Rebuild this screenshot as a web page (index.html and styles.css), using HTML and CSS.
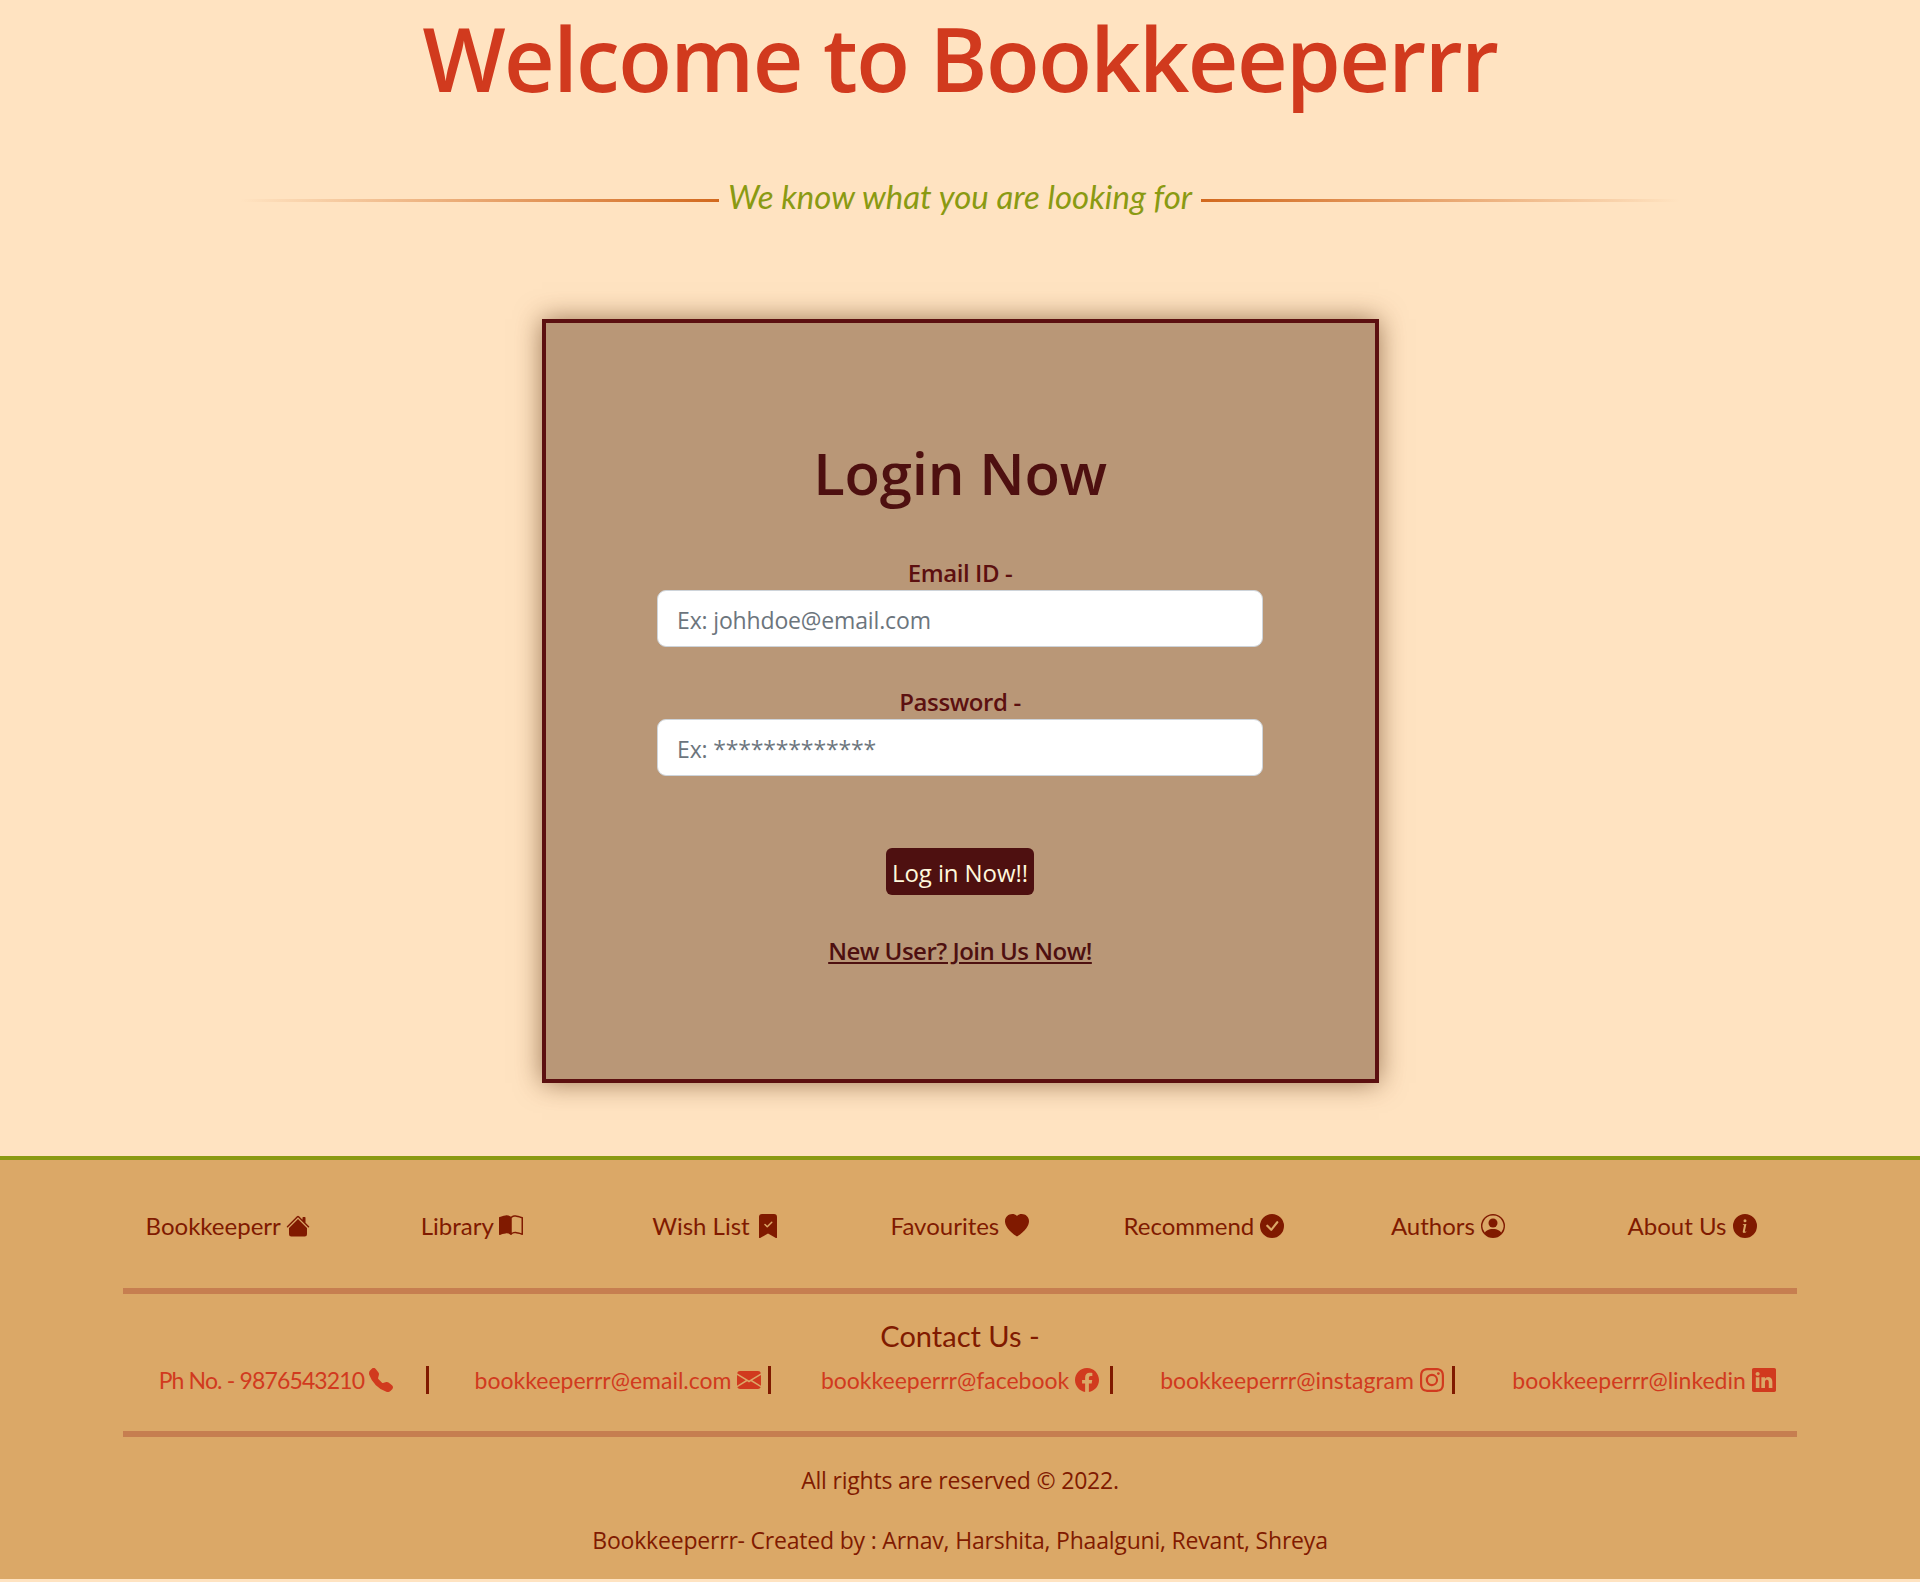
FILE: index.html
```html
<!DOCTYPE html>
<html lang="en">
<head>
    <meta charset="UTF-8">
    <meta name="viewport" content="width=device-width, initial-scale=1.0">
    <title>Bookkeeperrr - Login</title>
    <link rel="stylesheet" href="styles.css">
</head>
<body>
    <header class="header">
        <h1>Welcome to Bookkeeperrr</h1>
        <div class="tagline">
            <span class="tagline-line left"></span>
            <em>We know what you are looking for</em>
            <span class="tagline-line right"></span>
        </div>
    </header>

    <main class="login-card">
        <h2>Login Now</h2>
        <form class="login-form">
            <label for="email">Email ID -</label>
            <input type="text" id="email" placeholder="Ex: johhdoe@email.com">
            <label for="password" class="second">Password -</label>
            <input type="text" id="password" placeholder="Ex: *************">
            <button type="button">Log in Now!!</button>
            <a href="#" class="join-link">New User? Join Us Now!</a>
        </form>
    </main>

    <footer class="footer">
        <nav class="footer-nav">
            <a href="#">Bookkeeperr
                <svg class="icon" viewBox="0 0 16 16"><path d="M8.707 1.5a1 1 0 0 0-1.414 0L.646 8.146a.5.5 0 0 0 .708.708L8 2.207l6.646 6.647a.5.5 0 0 0 .708-.708L13 5.793V2.5a.5.5 0 0 0-.5-.5h-1a.5.5 0 0 0-.5.5v1.293L8.707 1.5Z"/><path d="m8 3.293 6 6V13.5a1.5 1.5 0 0 1-1.5 1.5h-9A1.5 1.5 0 0 1 2 13.5V9.293l6-6Z"/></svg>
            </a>
            <a href="#">Library
                <svg class="icon" viewBox="0 0 16 16"><path d="M8.5 2.687c.654-.689 1.782-.886 3.112-.752 1.234.124 2.503.523 3.388.893v9.923c-.918-.35-2.107-.692-3.287-.81-1.094-.111-2.278-.039-3.213.492V2.687zM8 1.783C7.015.936 5.587.81 4.287.94c-1.514.153-3.042.672-3.994 1.105A.5.5 0 0 0 0 2.5v11a.5.5 0 0 0 .707.455c.882-.4 2.303-.881 3.68-1.02 1.409-.142 2.59.087 3.223.877a.5.5 0 0 0 .78 0c.633-.79 1.814-1.019 3.222-.877 1.378.139 2.8.62 3.681 1.02A.5.5 0 0 0 16 13.5v-11a.5.5 0 0 0-.293-.455c-.952-.433-2.48-.952-3.994-1.105C10.413.809 8.985.936 8 1.783z"/></svg>
            </a>
            <a href="#">Wish List
                <svg class="icon" viewBox="0 0 16 16"><path fill-rule="evenodd" d="M2 15.5V2a2 2 0 0 1 2-2h8a2 2 0 0 1 2 2v13.5a.5.5 0 0 1-.74.439L8 13.069l-5.26 2.87A.5.5 0 0 1 2 15.5zm8.854-9.646a.5.5 0 0 0-.708-.708L7.5 7.793 6.354 6.646a.5.5 0 1 0-.708.708l1.5 1.5a.5.5 0 0 0 .708 0l3-3z"/></svg>
            </a>
            <a href="#">Favourites
                <svg class="icon" viewBox="0 0 16 16"><path fill-rule="evenodd" d="M8 1.314C12.438-3.248 23.534 4.735 8 15-7.534 4.736 3.562-3.248 8 1.314z"/></svg>
            </a>
            <a href="#">Recommend
                <svg class="icon" viewBox="0 0 16 16"><path d="M16 8A8 8 0 1 1 0 8a8 8 0 0 1 16 0zm-3.97-3.03a.75.75 0 0 0-1.08.022L7.477 9.417 5.384 7.323a.75.75 0 0 0-1.06 1.06L6.97 11.03a.75.75 0 0 0 1.079-.02l3.992-4.99a.75.75 0 0 0-.01-1.05z"/></svg>
            </a>
            <a href="#">Authors
                <svg class="icon" viewBox="0 0 16 16"><path d="M11 6a3 3 0 1 1-6 0 3 3 0 0 1 6 0z"/><path fill-rule="evenodd" d="M0 8a8 8 0 1 1 16 0A8 8 0 0 1 0 8zm8-7a7 7 0 0 0-5.468 11.37C3.242 11.226 4.805 10 8 10s4.757 1.225 5.468 2.37A7 7 0 0 0 8 1z"/></svg>
            </a>
            <a href="#">About Us
                <svg class="icon" viewBox="0 0 16 16"><path d="M8 16A8 8 0 1 0 8 0a8 8 0 0 0 0 16zm.93-9.412-1 4.705c-.07.34.029.533.304.533.194 0 .487-.07.686-.246l-.088.416c-.287.346-.92.598-1.465.598-.703 0-1.002-.422-.808-1.319l.738-3.468c.064-.293.006-.399-.287-.47l-.451-.081.082-.381 2.29-.287zM8 5.5a1 1 0 1 1 0-2 1 1 0 0 1 0 2z"/></svg>
            </a>
        </nav>

        <hr class="rule">

        <h3>Contact Us -</h3>
        <div class="contact-row">
            <a href="#" class="phone">Ph No. - 9876543210
                <svg class="icon" viewBox="0 0 16 16"><path fill-rule="evenodd" d="M1.885.511a1.745 1.745 0 0 1 2.61.163L6.29 2.98c.329.423.445.974.315 1.494l-.547 2.19a.678.678 0 0 0 .178.643l2.457 2.457a.678.678 0 0 0 .644.178l2.189-.547a1.745 1.745 0 0 1 1.494.315l2.306 1.794c.829.645.905 1.87.163 2.611l-1.034 1.034c-.74.74-1.846 1.065-2.877.702a18.634 18.634 0 0 1-7.01-4.42 18.634 18.634 0 0 1-4.42-7.009c-.362-1.03-.037-2.137.703-2.877L1.885.511z"/></svg>
            </a>
            <a href="#">bookkeeperrr@email.com
                <svg class="icon" viewBox="0 0 16 16"><path d="M.05 3.555A2 2 0 0 1 2 2h12a2 2 0 0 1 1.95 1.555L8 8.414.05 3.555zM0 4.697v7.104l5.803-3.558L0 4.697zM6.761 8.83l-6.57 4.027A2 2 0 0 0 2 14h12a2 2 0 0 0 1.808-1.144l-6.57-4.027L8 9.586l-1.239-.757zm3.436-.586L16 11.801V4.697l-5.803 3.546z"/></svg>
            </a>
            <a href="#">bookkeeperrr@facebook
                <svg class="icon" viewBox="0 0 16 16"><path d="M16 8.049c0-4.446-3.582-8.05-8-8.05C3.58 0-.002 3.603-.002 8.05c0 4.017 2.926 7.347 6.75 7.951v-5.625h-2.03V8.05H6.75V6.275c0-2.017 1.195-3.131 3.022-3.131.876 0 1.791.157 1.791.157v1.98h-1.009c-.993 0-1.303.621-1.303 1.258v1.51h2.218l-.354 2.326H9.25V16c3.824-.604 6.75-3.934 6.75-7.951z"/></svg>
            </a>
            <a href="#">bookkeeperrr@instagram
                <svg class="icon" viewBox="0 0 16 16"><path d="M8 0C5.829 0 5.556.01 4.703.048 3.85.088 3.269.222 2.76.42a3.917 3.917 0 0 0-1.417.923A3.927 3.927 0 0 0 .42 2.76C.222 3.268.087 3.85.048 4.7.01 5.555 0 5.827 0 8.001c0 2.172.01 2.444.048 3.297.04.852.174 1.433.372 1.942.205.526.478.972.923 1.417.444.445.89.719 1.416.923.51.198 1.09.333 1.942.372C5.555 15.99 5.827 16 8 16s2.444-.01 3.298-.048c.851-.04 1.434-.174 1.943-.372a3.916 3.916 0 0 0 1.416-.923c.445-.445.718-.891.923-1.417.197-.509.332-1.09.372-1.942C15.99 10.445 16 10.173 16 8s-.01-2.445-.048-3.299c-.04-.851-.175-1.433-.372-1.941a3.926 3.926 0 0 0-.923-1.417A3.911 3.911 0 0 0 13.24.42c-.51-.198-1.092-.333-1.943-.372C10.443.01 10.172 0 7.998 0h.003zm-.717 1.442h.718c2.136 0 2.389.007 3.232.046.78.035 1.204.166 1.486.275.373.145.64.319.92.599.28.28.453.546.598.92.11.281.24.705.275 1.485.039.843.047 1.096.047 3.231s-.008 2.389-.047 3.232c-.035.78-.166 1.203-.275 1.485a2.47 2.47 0 0 1-.599.919c-.28.28-.546.453-.92.598-.28.11-.704.24-1.485.276-.843.038-1.096.047-3.232.047s-2.39-.009-3.233-.047c-.78-.036-1.203-.166-1.485-.276a2.478 2.478 0 0 1-.92-.598 2.48 2.48 0 0 1-.6-.92c-.109-.281-.24-.705-.275-1.485-.038-.843-.046-1.096-.046-3.233 0-2.136.008-2.388.046-3.231.036-.78.166-1.204.276-1.486.145-.373.319-.64.599-.92.28-.28.546-.453.92-.598.282-.11.705-.24 1.485-.276.738-.034 1.024-.044 2.515-.045v.002zm4.988 1.328a.96.96 0 1 0 0 1.92.96.96 0 0 0 0-1.92zm-4.27 1.122a4.109 4.109 0 1 0 0 8.217 4.109 4.109 0 0 0 0-8.217zm0 1.441a2.667 2.667 0 1 1 0 5.334 2.667 2.667 0 0 1 0-5.334z"/></svg>
            </a>
            <a href="#">bookkeeperrr@linkedin
                <svg class="icon" viewBox="0 0 16 16"><path d="M0 1.146C0 .513.526 0 1.175 0h13.65C15.474 0 16 .513 16 1.146v13.708c0 .633-.526 1.146-1.175 1.146H1.175C.526 16 0 15.487 0 14.854V1.146zm4.943 12.248V6.169H2.542v7.225h2.401zm-1.2-8.212c.837 0 1.358-.554 1.358-1.248-.015-.709-.52-1.248-1.342-1.248-.822 0-1.359.54-1.359 1.248 0 .694.521 1.248 1.327 1.248h.016zm4.908 8.212V9.359c0-.216.016-.432.08-.586.173-.431.568-.878 1.232-.878.869 0 1.216.662 1.216 1.634v3.865h2.401V9.25c0-2.22-1.184-3.252-2.764-3.252-1.274 0-1.845.7-2.165 1.193v.025h-.016a5.54 5.54 0 0 1 .016-.025V6.169h-2.4c.03.678 0 7.225 0 7.225h2.4z"/></svg>
            </a>
        </div>

        <hr class="rule second">

        <p class="credits">All rights are reserved © 2022.</p>
        <p class="credits">Bookkeeperrr- Created by : Arnav, Harshita, Phaalguni, Revant, Shreya</p>
    </footer>
</body>
</html>
```

FILE: styles.css
```css
* {
    box-sizing: border-box;
}

body {
    margin: 0;
    background: #ffe3c1;
    font-family: 'Open Sans', 'Liberation Sans', sans-serif;
}

.header h1 {
    margin: 0;
    color: #d13a1e;
    font-size: 88px;
    font-weight: 600;
    letter-spacing: -1.6px;
    line-height: 116px;
    text-align: center;
}

.tagline {
    display: flex;
    justify-content: center;
    align-items: center;
    gap: 9px;
    height: 44px;
    margin-top: 58px;
}

.tagline em {
    color: #8a9a12;
    font-family: 'Lato', sans-serif;
    font-size: 33px;
    line-height: 44px;
}

.tagline-line {
    width: 479px;
    height: 3px;
    margin-top: 9px;
}

.tagline-line.left {
    background: linear-gradient(to right, transparent, #d2691e);
}

.tagline-line.right {
    background: linear-gradient(to left, transparent, #d2691e);
}

.login-card {
    width: 837px;
    height: 764px;
    margin: 101px auto 73px;
    padding-top: 115px;
    background: #b99777;
    border: 4px solid #5c1010;
    box-shadow: 0 0 25px rgba(92, 50, 16, 0.6);
}

.login-card h2 {
    margin: 0;
    color: #4e1010;
    font-size: 58px;
    font-weight: 600;
    letter-spacing: -0.2px;
    line-height: 70px;
    text-align: center;
}

.login-form {
    display: flex;
    flex-direction: column;
    align-items: center;
    width: 606px;
    margin: 50px auto 0;
}

.login-form label {
    margin-bottom: 2px;
    color: #5c1010;
    font-size: 24px;
    font-weight: 600;
    letter-spacing: -0.4px;
    line-height: 30px;
}

.login-form label.second {
    margin-top: 40px;
}

.login-form input {
    width: 100%;
    height: 57px;
    padding: 3px 19px 0;
    background: white;
    border: 1px solid #ced4da;
    border-radius: 9px;
    font-family: inherit;
    font-size: 23px;
    letter-spacing: -0.15px;
}

.login-form input::placeholder {
    color: #6c757d;
    opacity: 1;
}

.login-form button {
    width: 148px;
    height: 47px;
    margin-top: 72px;
    padding: 1px 0 0;
    background: #4e1010;
    border: none;
    border-radius: 6px;
    color: cornsilk;
    font-family: inherit;
    font-size: 24px;
    letter-spacing: -0.1px;
}

.join-link {
    margin-top: 40px;
    color: #4e1010;
    font-size: 24px;
    font-weight: 600;
    letter-spacing: -0.5px;
    line-height: 32px;
}

.footer {
    margin-bottom: 2px;
    padding: 41px 0 23px;
    background: #dba867;
    border-top: 4px solid #8a9a12;
    text-align: center;
}

.icon {
    width: 24px;
    height: 24px;
    fill: currentColor;
    vertical-align: -3px;
}

.footer-nav {
    display: grid;
    grid-template-columns: repeat(7, 244px);
    justify-content: center;
    align-items: center;
    height: 48px;
    margin-bottom: 39px;
    font-family: 'Lato', sans-serif;
    font-size: 24px;
}

.footer-nav a {
    color: #801a00;
    text-decoration: none;
}

.rule {
    width: 1674px;
    height: 6px;
    margin: 0 auto;
    background: #c67e50;
    border: none;
}

.rule.second {
    margin-top: 37px;
}

.footer h3 {
    margin: 24px 0 0;
    color: #801a00;
    font-family: 'Lato', sans-serif;
    font-size: 29px;
    font-weight: 400;
    line-height: 36px;
}

.contact-row {
    display: grid;
    grid-template-columns: repeat(5, 342px);
    justify-content: center;
    margin-top: 12px;
    font-family: 'Lato', sans-serif;
    font-size: 23px;
}

.contact-row a {
    height: 28px;
    margin: 0 18px;
    color: #d13a1e;
    line-height: 28px;
    text-decoration: none;
    white-space: nowrap;
    border-left: 3px solid transparent;
    border-right: 3px solid #801a00;
}

.contact-row a:last-child {
    border-right-color: transparent;
}

.contact-row .phone {
    letter-spacing: -0.85px;
}

.credits {
    margin: 29px 0 0;
    color: #801a00;
    font-size: 23px;
    letter-spacing: -0.2px;
    line-height: 31px;
}

.rule.second + .credits {
    margin-top: 28px;
}
```
